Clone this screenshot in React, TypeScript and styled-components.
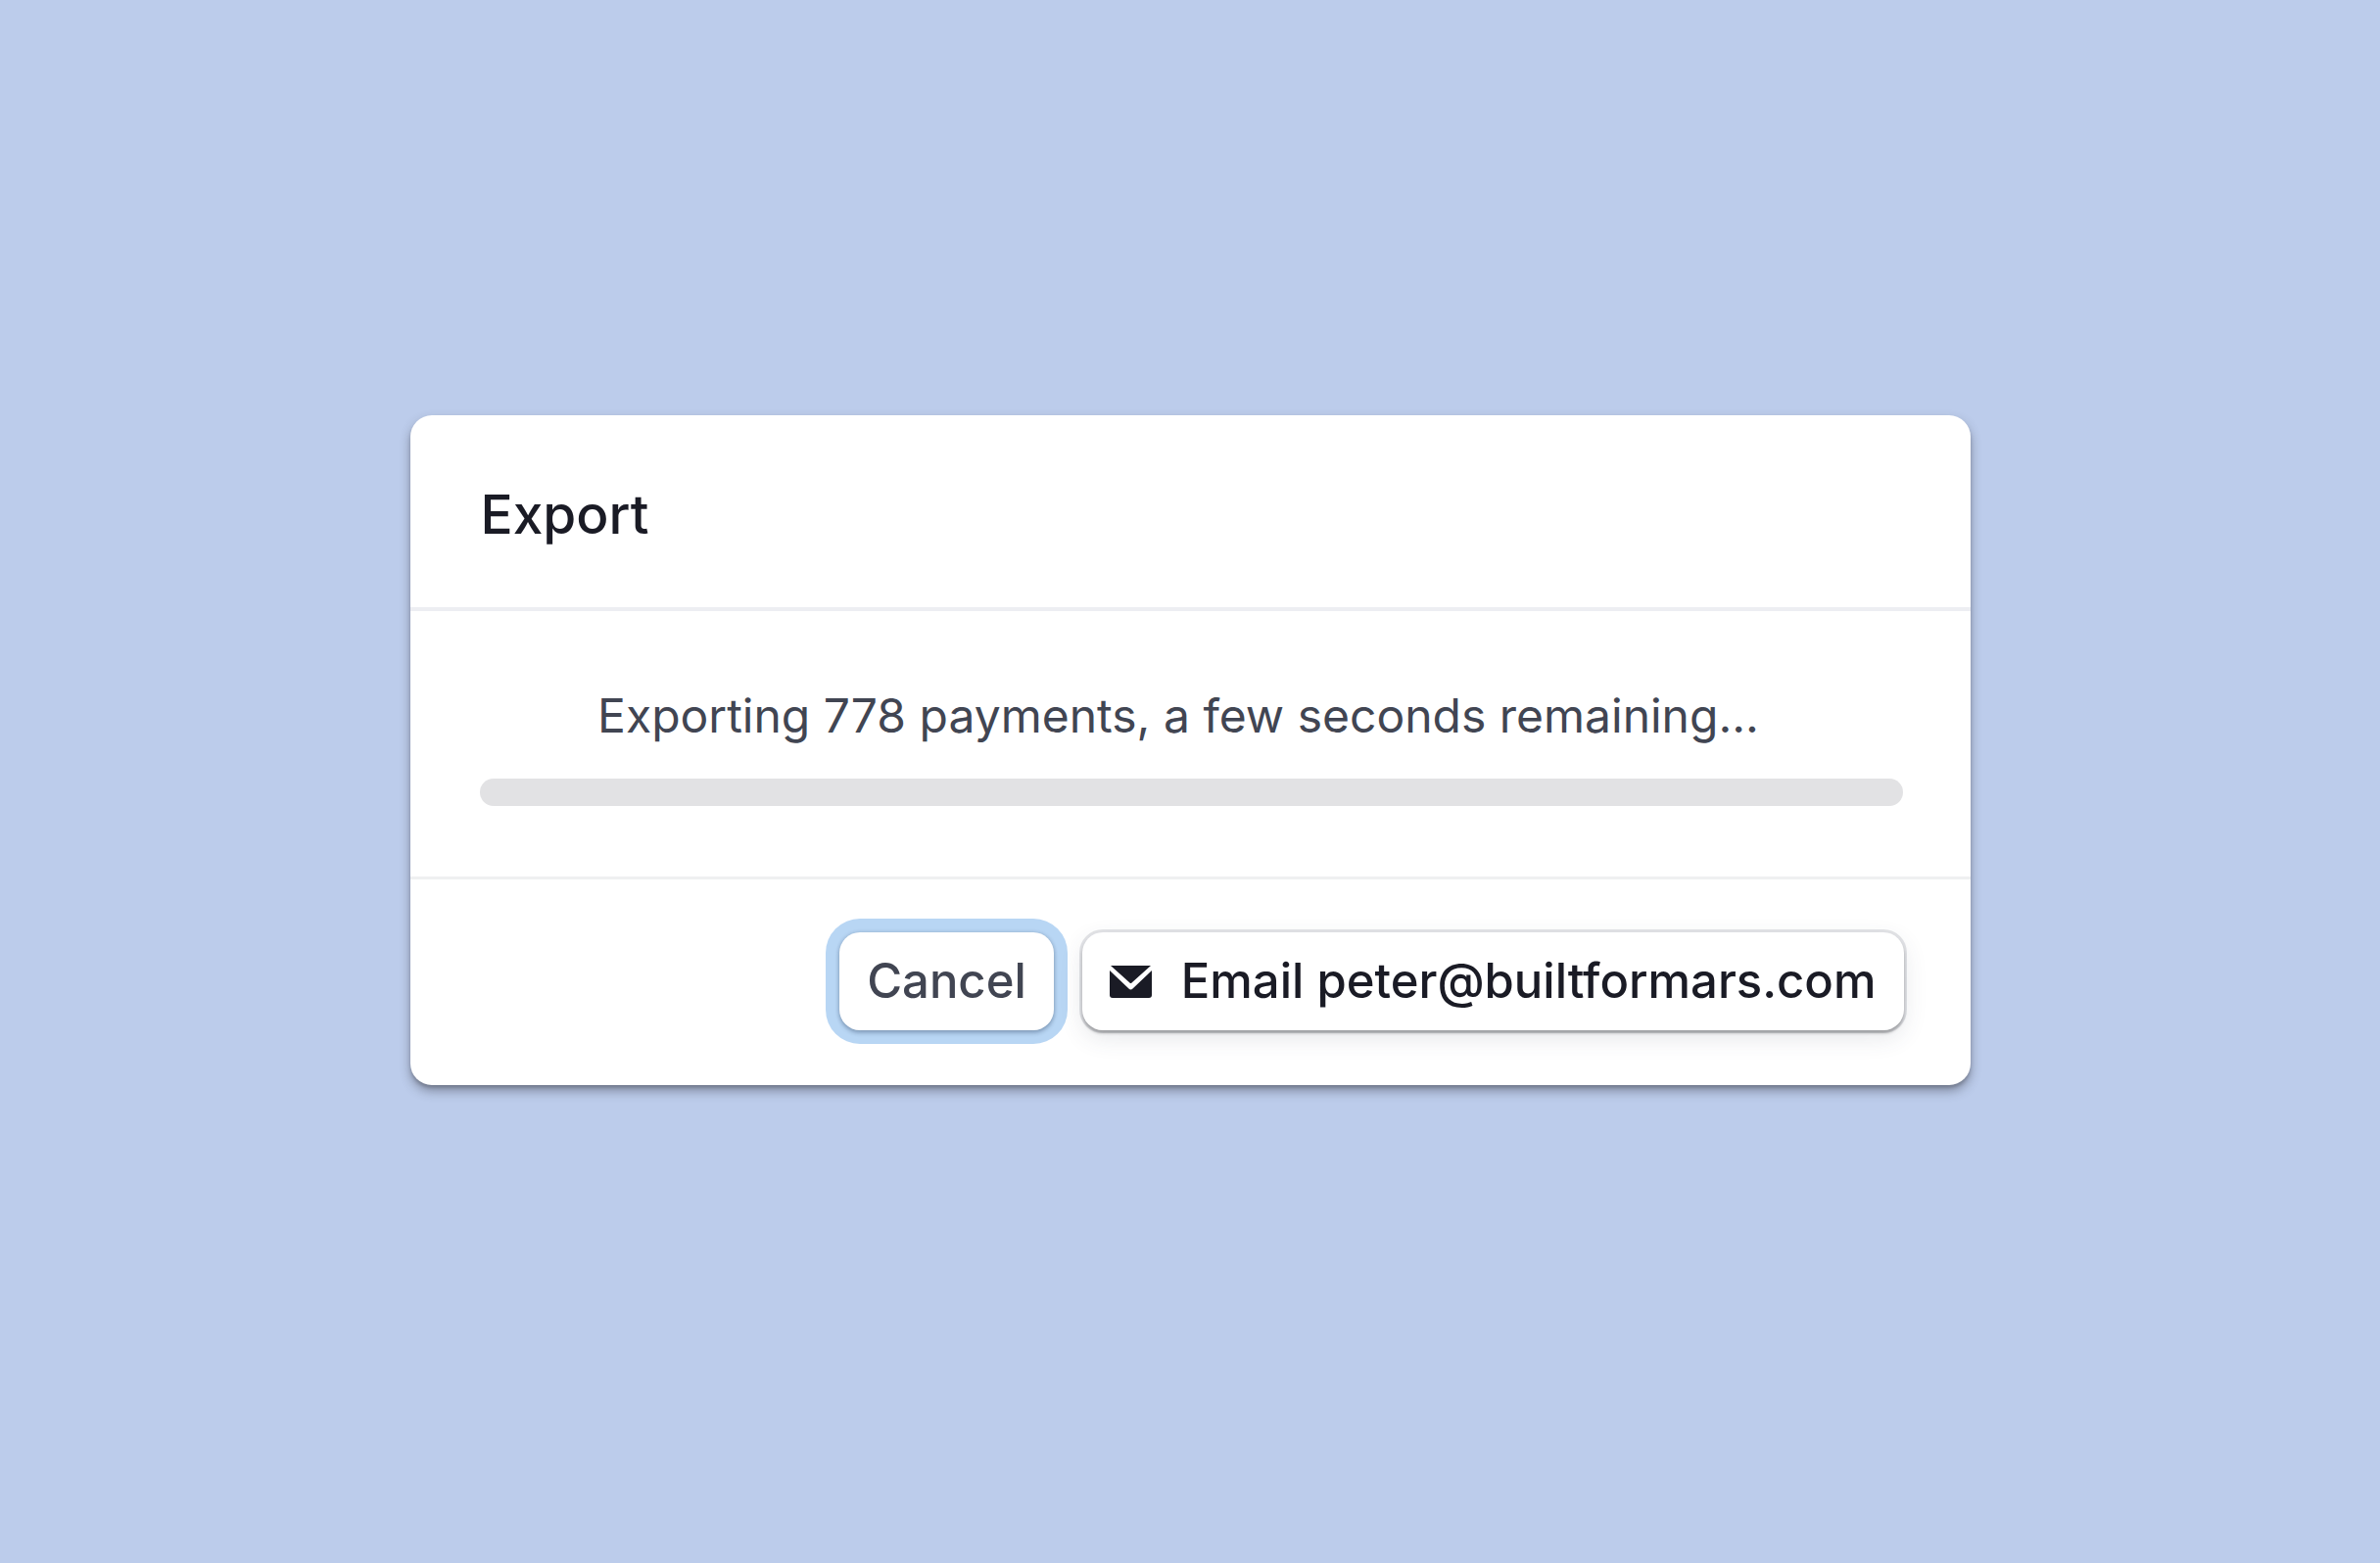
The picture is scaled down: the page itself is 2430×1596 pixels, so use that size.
import React from "react";
import styled, { createGlobalStyle } from "styled-components";

const GlobalStyle = createGlobalStyle`
  *, *::before, *::after { box-sizing: border-box; }
  body {
    margin: 0;
    background: #bccceb;
    font-family: Inter, "Noto Sans", sans-serif;
    -webkit-font-smoothing: antialiased;
  }
`;

const Page = styled.main`
  display: flex;
  align-items: center;
  justify-content: center;
  min-height: 100vh;
  padding: 40px 40px 104px;
`;

const Dialog = styled.section`
  width: 100%;
  max-width: 1593px;
  background: #fff;
  border-radius: 22px;
  box-shadow: 0 3px 3px rgba(50, 50, 60, 0.22), 0 6px 11px rgba(50, 50, 60, 0.42);
`;

const Header = styled.header`
  padding: 69px 69px 63px 72px;
  border-bottom: 4px solid #edeef2;
`;

const Title = styled.h1`
  margin: 0;
  font-size: 55px;
  line-height: 64px;
  font-weight: 500;
  color: #1a1b25;
`;

const Body = styled.div`
  display: flex;
  flex-direction: column;
  gap: 32px;
  padding: 75px 69px 72px 71px;
`;

const Status = styled.label`
  padding-right: 26px;
  text-align: center;
  font-size: 48px;
  line-height: 64px;
  color: #414552;
`;

const Bar = styled.progress`
  appearance: none;
  display: block;
  width: 100%;
  height: 28px;
  border: 0;
  border-radius: 14px;
  overflow: hidden;
  background: #e2e2e4;

  &::-webkit-progress-bar { background: #e2e2e4; }
  &::-webkit-progress-value { background: #635bff; }
`;

const Footer = styled.footer`
  display: flex;
  flex-wrap: wrap;
  justify-content: flex-end;
  gap: 29px;
  padding: 54px 68px 56px;
  border-top: 3px solid #eff0f1;
`;

const Button = styled.button<{ $focused?: boolean }>`
  display: flex;
  align-items: center;
  gap: 30px;
  height: 100px;
  padding: 0 28px;
  border: 0;
  border-radius: 21px;
  background: #fff;
  color: ${(p) => (p.$focused ? "#414552" : "#1a1b25")};
  font: 500 49px/64px Inter, "Noto Sans", sans-serif;
  white-space: nowrap;
  box-shadow: ${(p) =>
    p.$focused
      ? "0 3px 4px rgba(20, 40, 70, 0.25), 0 0 4px rgba(20, 40, 70, 0.2), 0 0 0 14px #b8d6f4"
      : "0 3px 3px rgba(0, 0, 0, 0.25), 0 0 0 3px rgba(60, 66, 87, 0.14), 0 8px 24px rgba(60, 66, 87, 0.12)"};
`;

const Mail = styled.svg`
  width: 43px;
  height: 33px;
  flex: none;
`;

export default function App() {
  return (
    <>
      <GlobalStyle />
      <Page>
        <Dialog role="dialog" aria-labelledby="export-title">
          <Header>
            <Title id="export-title">Export</Title>
          </Header>
          <Body>
            <Status htmlFor="export-progress">
              Exporting 778 payments, a few seconds remaining...
            </Status>
            <Bar id="export-progress" value={0} max={778} />
          </Body>
          <Footer>
            <Button type="button" $focused>
              Cancel
            </Button>
            <Button type="button">
              <Mail viewBox="0 0 43 33" fill="#1a1b25" aria-hidden="true">
                <path d="M1 0H42L22.5 17.5Q21.5 18.5 20.5 17.5Z" />
                <path d="M0 5L19.5 23.5Q21.5 25.5 23.5 23.5L43 5V30Q43 33 40 33H3Q0 33 0 30Z" />
              </Mail>
              Email peter@builtformars.com
            </Button>
          </Footer>
        </Dialog>
      </Page>
    </>
  );
}
